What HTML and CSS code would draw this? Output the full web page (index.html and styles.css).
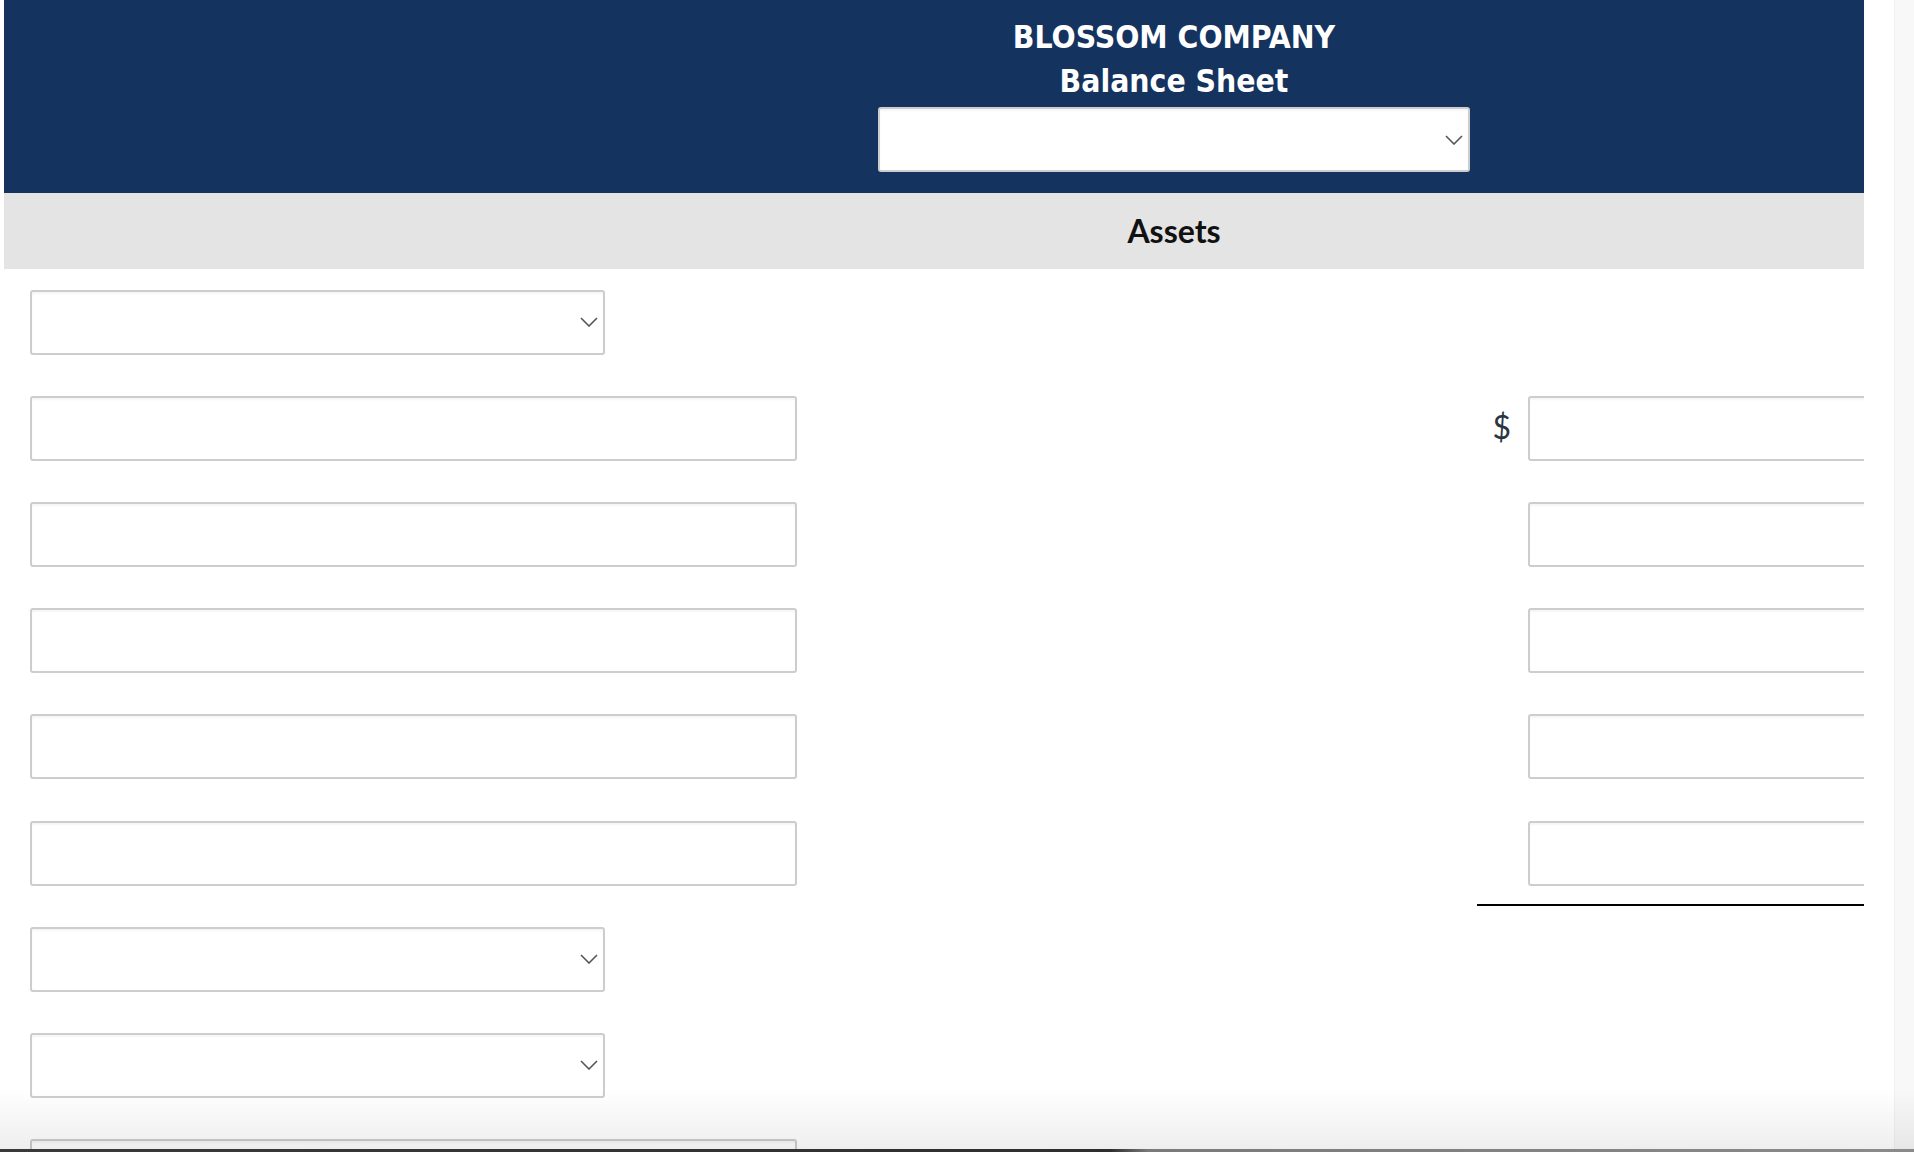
FILE: index.html
```html
<!DOCTYPE html>
<html lang="en">
<head>
<meta charset="utf-8">
<title>Blossom Company Balance Sheet</title>
<link rel="stylesheet" href="styles.css">
</head>
<body>
<div class="page">
  <div class="sheet">
    <div class="table">
      <header class="head">
        <div class="title">BLOSSOM COMPANY</div>
        <div class="title">Balance Sheet</div>
        <div class="select select-date">
          <svg class="chev" width="18" height="10" viewBox="0 0 18 10"><path d="M1 1 L9 9 L17 1" fill="none" stroke="#555" stroke-width="1.6"/></svg>
        </div>
      </header>
      <div class="band">Assets</div>
      <div class="rows">
        <div class="row">
          <div class="cell left"><div class="select select-item"><svg class="chev" width="18" height="10" viewBox="0 0 18 10"><path d="M1 1 L9 9 L17 1" fill="none" stroke="#555" stroke-width="1.6"/></svg></div></div>
          <div class="cell dollar"></div>
          <div class="cell amount"></div>
        </div>
        <div class="row">
          <div class="cell left"><div class="input wide"></div></div>
          <div class="cell dollar">$</div>
          <div class="cell amount"><div class="input num"></div></div>
        </div>
        <div class="row">
          <div class="cell left"><div class="input wide"></div></div>
          <div class="cell dollar"></div>
          <div class="cell amount"><div class="input num"></div></div>
        </div>
        <div class="row">
          <div class="cell left"><div class="input wide"></div></div>
          <div class="cell dollar"></div>
          <div class="cell amount"><div class="input num"></div></div>
        </div>
        <div class="row">
          <div class="cell left"><div class="input wide"></div></div>
          <div class="cell dollar"></div>
          <div class="cell amount"><div class="input num"></div></div>
        </div>
        <div class="row">
          <div class="cell left"><div class="input wide"></div></div>
          <div class="cell dollar total"></div>
          <div class="cell amount total"><div class="input num"></div></div>
        </div>
        <div class="row">
          <div class="cell left"><div class="select select-item"><svg class="chev" width="18" height="10" viewBox="0 0 18 10"><path d="M1 1 L9 9 L17 1" fill="none" stroke="#555" stroke-width="1.6"/></svg></div></div>
          <div class="cell dollar"></div>
          <div class="cell amount"></div>
        </div>
        <div class="row">
          <div class="cell left"><div class="select select-item"><svg class="chev" width="18" height="10" viewBox="0 0 18 10"><path d="M1 1 L9 9 L17 1" fill="none" stroke="#555" stroke-width="1.6"/></svg></div></div>
          <div class="cell dollar"></div>
          <div class="cell amount"></div>
        </div>
        <div class="row">
          <div class="cell left"><div class="input wide"></div></div>
          <div class="cell dollar"></div>
          <div class="cell amount"></div>
        </div>
      </div>
    </div>
  </div>
  <div class="scrollbar"></div>
</div>
<div class="fade"></div>
<div class="dock"></div>
</body>
</html>
```
FILE: styles.css
```css
html, body {
  margin: 0;
  padding: 0;
  height: 1152px;
  overflow: hidden;
  background: #ffffff;
  font-family: Lato, "Liberation Sans", sans-serif;
}

.page {
  display: flex;
  height: 1152px;
  padding-left: 4px;
}

.sheet {
  width: 1860px;
  overflow: hidden;
  flex: none;
}

.table {
  width: 2340px;
}

.head {
  height: 193px;
  box-sizing: border-box;
  background: #15335f;
  padding-top: 15px;
  display: flex;
  flex-direction: column;
  align-items: center;
}

.title {
  color: #ffffff;
  font-family: "DejaVu Sans Condensed", "DejaVu Sans", Verdana, sans-serif;
  font-stretch: condensed;
  font-size: 31.6px;
  font-weight: 700;
  line-height: 44px;
}

.band {
  height: 76px;
  line-height: 76px;
  background: #e4e4e4;
  text-align: center;
  font-size: 32px;
  font-weight: 700;
  color: #111111;
}

.select,
.input {
  box-sizing: border-box;
  height: 65px;
  background: #ffffff;
  border: 2px solid #cdcdcd;
  border-radius: 3px;
  box-shadow: inset 0 2px 2px rgba(0, 0, 0, 0.04);
}

.select {
  display: flex;
  align-items: center;
  justify-content: flex-end;
  padding-right: 5px;
}

.select-date {
  width: 592px;
  margin-top: 4px;
}

.select-item {
  width: 575px;
}

.chev {
  display: block;
}

.rows {
  padding-left: 26px;
}

.row {
  display: flex;
}

.cell {
  padding: 20.6px 0;
  flex: none;
}

.left {
  width: 1447px;
}

.dollar {
  width: 51px;
  box-sizing: border-box;
  padding-right: 17px;
  text-align: right;
  font-size: 32px;
  line-height: 61px;
  color: #2b3540;
}

.amount {
  width: 600px;
}

.total {
  padding-bottom: 18.6px;
  border-bottom: 2px solid #000000;
}

.input.wide {
  width: 767px;
}

.input.num {
  width: 500px;
}

.row > .cell:empty {
  min-height: 65px;
}

.scrollbar {
  flex: none;
  width: 20px;
  margin-left: 30px;
  height: 1152px;
  background: #f8f8f8;
  border-left: 1px solid #f0f0f0;
  box-sizing: border-box;
}

.fade {
  position: fixed;
  left: 0;
  right: 0;
  bottom: 3px;
  height: 60px;
  background: linear-gradient(to bottom, rgba(0, 0, 0, 0), rgba(0, 0, 0, 0.065));
  pointer-events: none;
}

.dock {
  position: fixed;
  left: 0;
  right: 0;
  bottom: 0;
  height: 3px;
  background: linear-gradient(to right, #3a3a3a 0%, #2e2e2e 58%, #7a7a7a 60%, #8a8a8a 100%);
}
```
